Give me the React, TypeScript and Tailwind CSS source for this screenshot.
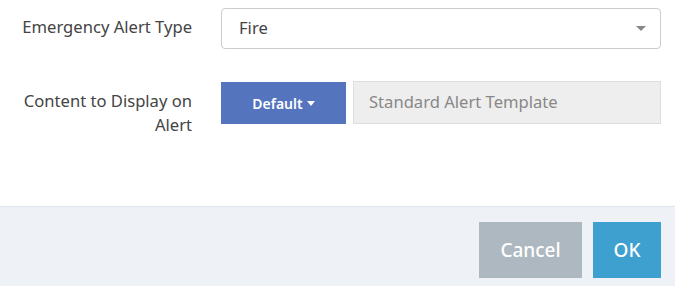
import React from "react";

export default function App() {
  return (
    <div className="w-[675px] h-[286px] bg-white flex flex-col font-['Noto_Sans',sans-serif] text-[16.6px] text-[#333]">
      {/* Form body */}
      <div className="flex-1 flex flex-col pt-[8px] gap-[32px]">
        <div className="flex items-start">
          <label className="w-[192px] text-right pt-[7px] leading-[24px] text-[#444] whitespace-nowrap">
            Emergency Alert Type
          </label>
          <div className="ml-[29px] w-[440px] h-[41px] border border-[#ccc] rounded-[4px] flex items-center justify-between pl-[17px] pr-[14px]">
            <span className="text-[#444]">Fire</span>
            <span className="w-0 h-0 border-l-[5px] border-r-[5px] border-t-[5px] border-l-transparent border-r-transparent border-t-[#888]" />
          </div>
        </div>

        <div className="flex items-start">
          <label className="w-[192px] text-right pt-[8px] leading-[24px] text-[#444] pl-[12px]">
            Content to Display on Alert
          </label>
          <div className="ml-[29px] flex gap-[7px]">
            <button className="w-[125px] h-[42px] mt-[1px] bg-[#5474be] text-white text-[14px] font-semibold flex items-center justify-center gap-[4px]">
              Default
              <span className="w-0 h-0 border-l-[4px] border-r-[4px] border-t-[5px] border-l-transparent border-r-transparent border-t-white" />
            </button>
            <div className="w-[308px] h-[43px] bg-[#eee] border border-[#ddd] flex items-center pl-[15px] text-[#888]">
              Standard Alert Template
            </div>
          </div>
        </div>
      </div>

      {/* Footer */}
      <div className="h-[80px] bg-[#eef1f6] border-t border-[#e1e4ea] flex items-start justify-end gap-[11px] pt-[15px] pr-[14px]">
        <button className="w-[103px] h-[56px] bg-[#adb8c1] text-white text-[19px] font-medium">
          Cancel
        </button>
        <button className="w-[68px] h-[56px] bg-[#3ea0cf] text-white text-[19px] font-medium">
          OK
        </button>
      </div>
    </div>
  );
}
